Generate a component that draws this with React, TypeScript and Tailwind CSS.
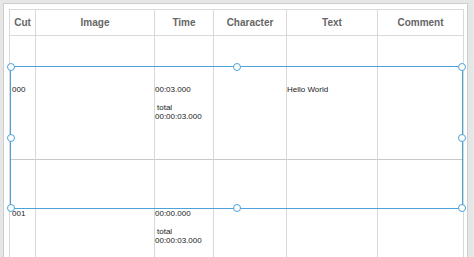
const cols = [
  { label: "Cut", w: "w-[26px]" },
  { label: "Image", w: "w-[119px]" },
  { label: "Time", w: "w-[59px]" },
  { label: "Character", w: "w-[73px]" },
  { label: "Text", w: "w-[91px]" },
  { label: "Comment", w: "w-[86px]" },
];

const rows = [
  { cut: "000", time: "00:03.000", total: "00:00:03.000", text: "Hello World" },
  { cut: "001", time: "00:00.000", total: "00:00:03.000", text: "" },
];

function Handle({ pos }: { pos: string }) {
  return (
    <span
      className={`absolute h-[8px] w-[8px] -translate-x-1/2 -translate-y-1/2 rounded-full border border-[#4ea2da] bg-white ${pos}`}
    />
  );
}

export default function App() {
  return (
    <div
      className="relative h-[257px] w-[474px] overflow-hidden bg-[#e6e6e6] pl-[3px] pr-[6px] pt-[3px]"
      style={{ fontFamily: '"Liberation Sans", Arial, sans-serif' }}
    >
      <div className="h-full border-l border-r border-t border-[#cdcdcd] bg-white pl-[5px] pt-[5px]">
        <div className="w-[455px] border-l border-t border-[#d9d9d9]">
          <div className="flex">
            {cols.map((c) => (
              <div
                key={c.label}
                className={`${c.w} flex h-[26px] items-center justify-center border-b border-r border-[#d9d9d9] text-[10px] font-bold text-[#666]`}
              >
                {c.label}
              </div>
            ))}
          </div>
          {rows.map((r) => (
            <div key={r.cut} className="flex text-[8px] leading-[9px] text-[#222]">
              <div className="h-[124px] w-[26px] border-b border-r border-[#d9d9d9] border-b-[#c8c8c8] pl-[2px] pt-[49px]">
                {r.cut}
              </div>
              <div className="h-[124px] w-[119px] border-b border-r border-[#d9d9d9] border-b-[#c8c8c8]" />
              <div className="h-[124px] w-[59px] border-b border-r border-[#d9d9d9] border-b-[#c8c8c8] pt-[49px]">
                <div>{r.time}</div>
                <div className="mt-[9px] pl-[2px]">total</div>
                <div>{r.total}</div>
              </div>
              <div className="h-[124px] w-[73px] border-b border-r border-[#d9d9d9] border-b-[#c8c8c8]" />
              <div className="h-[124px] w-[91px] border-b border-r border-[#d9d9d9] border-b-[#c8c8c8] pt-[49px]">
                {r.text}
              </div>
              <div className="h-[124px] w-[86px] border-b border-r border-[#d9d9d9] border-b-[#c8c8c8]" />
            </div>
          ))}
        </div>
      </div>

      <div className="absolute left-[10px] top-[66px] h-[143px] w-[453px] border border-[#4ea2da]">
        <Handle pos="left-0 top-0" />
        <Handle pos="left-1/2 top-0" />
        <Handle pos="left-full top-0" />
        <Handle pos="left-0 top-1/2" />
        <Handle pos="left-full top-1/2" />
        <Handle pos="left-0 top-full" />
        <Handle pos="left-1/2 top-full" />
        <Handle pos="left-full top-full" />
      </div>
    </div>
  );
}
